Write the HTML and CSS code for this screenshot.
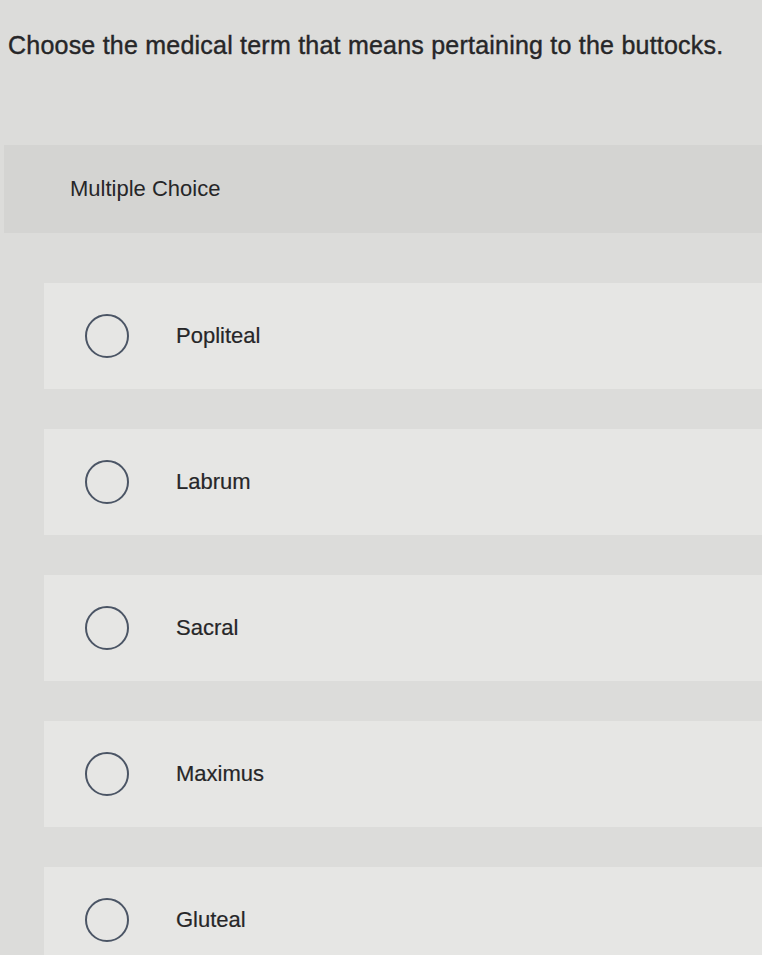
FILE: index.html
```html
<!DOCTYPE html>
<html lang="en">
<head>
    <meta charset="UTF-8">
    <meta name="viewport" content="width=device-width, initial-scale=1.0">
    <title>Multiple Choice</title>
    <link rel="stylesheet" href="styles.css">
</head>
<body>
    <h1 class="question">Choose the medical term that means pertaining to the buttocks.</h1>

    <div class="card">
        <div class="card-header">Multiple Choice</div>

        <div class="options">
            <label class="option">
                <span class="radio"></span>
                <span class="option-text">Popliteal</span>
            </label>
            <label class="option">
                <span class="radio"></span>
                <span class="option-text">Labrum</span>
            </label>
            <label class="option">
                <span class="radio"></span>
                <span class="option-text">Sacral</span>
            </label>
            <label class="option">
                <span class="radio"></span>
                <span class="option-text">Maximus</span>
            </label>
            <label class="option">
                <span class="radio"></span>
                <span class="option-text">Gluteal</span>
            </label>
        </div>
    </div>
</body>
</html>
```

FILE: styles.css
```css
:root {
    --page-bg: #dcdcda;
    --header-bg: #d4d4d2;
    --option-bg: #e6e6e4;
    --text-color: #262628;
    --radio-color: #4b5565;
}

* {
    margin: 0;
    padding: 0;
    box-sizing: border-box;
}

body {
    font-family: "Liberation Sans", Arial, sans-serif;
    background-color: var(--page-bg);
    color: var(--text-color);
    overflow: hidden;
}

.question {
    font-size: 25px;
    font-weight: normal;
    letter-spacing: 0.22px;
    -webkit-text-stroke: 0.4px var(--text-color);
    line-height: 30px;
    padding: 30px 0 0 8px;
    height: 145px;
}

.card {
    margin-left: 4px;
}

.card-header {
    height: 88px;
    display: flex;
    align-items: center;
    padding-left: 66px;
    background-color: var(--header-bg);
    font-size: 22px;
}

.options {
    display: flex;
    flex-direction: column;
    gap: 40px;
    padding: 50px 0 0 40px;
}

.option {
    height: 106px;
    display: flex;
    align-items: center;
    background-color: var(--option-bg);
    cursor: pointer;
}

.radio {
    width: 44px;
    height: 44px;
    margin-left: 41px;
    border: 2px solid var(--radio-color);
    border-radius: 50%;
    flex-shrink: 0;
}

.option-text {
    margin-left: 47px;
    font-size: 22px;
    -webkit-text-stroke: 0.2px var(--text-color);
}
```
